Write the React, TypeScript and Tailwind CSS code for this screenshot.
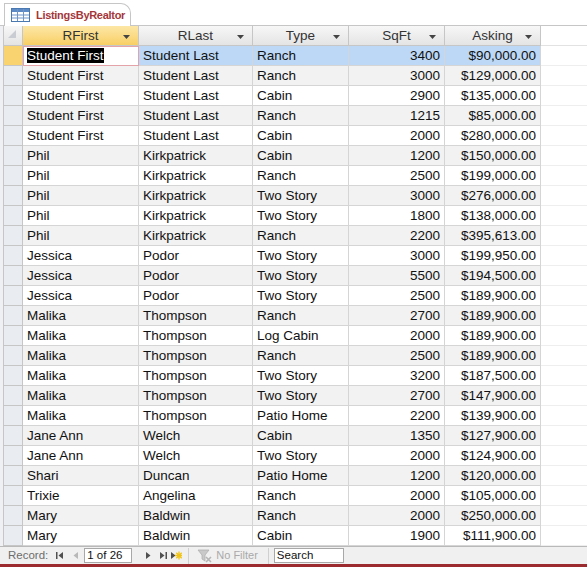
import React from "react";

type Row = [string, string, string, number, string];

const ROWS: Row[] = [
  ["Student First", "Student Last", "Ranch", 3400, "$90,000.00"],
  ["Student First", "Student Last", "Ranch", 3000, "$129,000.00"],
  ["Student First", "Student Last", "Cabin", 2900, "$135,000.00"],
  ["Student First", "Student Last", "Ranch", 1215, "$85,000.00"],
  ["Student First", "Student Last", "Cabin", 2000, "$280,000.00"],
  ["Phil", "Kirkpatrick", "Cabin", 1200, "$150,000.00"],
  ["Phil", "Kirkpatrick", "Ranch", 2500, "$199,000.00"],
  ["Phil", "Kirkpatrick", "Two Story", 3000, "$276,000.00"],
  ["Phil", "Kirkpatrick", "Two Story", 1800, "$138,000.00"],
  ["Phil", "Kirkpatrick", "Ranch", 2200, "$395,613.00"],
  ["Jessica", "Podor", "Two Story", 3000, "$199,950.00"],
  ["Jessica", "Podor", "Two Story", 5500, "$194,500.00"],
  ["Jessica", "Podor", "Two Story", 2500, "$189,900.00"],
  ["Malika", "Thompson", "Ranch", 2700, "$189,900.00"],
  ["Malika", "Thompson", "Log Cabin", 2000, "$189,900.00"],
  ["Malika", "Thompson", "Ranch", 2500, "$189,900.00"],
  ["Malika", "Thompson", "Two Story", 3200, "$187,500.00"],
  ["Malika", "Thompson", "Two Story", 2700, "$147,900.00"],
  ["Malika", "Thompson", "Patio Home", 2200, "$139,900.00"],
  ["Jane Ann", "Welch", "Cabin", 1350, "$127,900.00"],
  ["Jane Ann", "Welch", "Two Story", 2000, "$124,900.00"],
  ["Shari", "Duncan", "Patio Home", 1200, "$120,000.00"],
  ["Trixie", "Angelina", "Ranch", 2000, "$105,000.00"],
  ["Mary", "Baldwin", "Ranch", 2000, "$250,000.00"],
  ["Mary", "Baldwin", "Cabin", 1900, "$111,900.00"],
];

const COLS = "grid grid-cols-[19px_116px_114px_96px_96px_96px_1fr]";

function Arrow() {
  return (
    <svg width="7" height="4" viewBox="0 0 7 4" className="absolute right-[8px] top-[9px]">
      <path d="M0 0h7L3.5 4z" fill="#444" />
    </svg>
  );
}

function Header({ label, active }: { label: string; active?: boolean }) {
  return (
    <div
      className={`relative h-full border-r border-b border-[#c6c6c6] text-center leading-[19px] text-[#333] ${
        active ? "bg-gradient-to-b from-[#fde7a6] to-[#f8cf63]" : "bg-gradient-to-b from-[#f7f7f7] to-[#e4e4e4]"
      }`}
    >
      {label}
      <Arrow />
    </div>
  );
}

function TableIcon() {
  return (
    <svg width="19" height="14" viewBox="0 0 19 14">
      <rect x="0.5" y="0.5" width="18" height="13" fill="#fff" stroke="#4a78b0" />
      <rect x="1" y="1" width="17" height="3" fill="#5b8ac4" />
      <path d="M6.5 1v12M12.5 1v12M1 7h17M1 10h17" stroke="#6f95c8" strokeWidth="1" />
    </svg>
  );
}

function NavBtn({ kind, dim }: { kind: "first" | "prev" | "next" | "last" | "new"; dim?: boolean }) {
  const c = dim ? "#b8b8b8" : "#505050";
  return (
    <svg width="12" height="9" viewBox="0 0 12 9">
      {kind === "first" && (
        <>
          <rect x="2" y="1" width="1.5" height="7" fill={c} />
          <path d="M9 1v7L4.5 4.5z" fill={c} />
        </>
      )}
      {kind === "prev" && <path d="M8 1v7L3.5 4.5z" fill={c} />}
      {kind === "next" && <path d="M4 1v7l4.5-3.5z" fill={c} />}
      {kind === "last" && (
        <>
          <path d="M3 1v7l4.5-3.5z" fill={c} />
          <rect x="8.5" y="1" width="1.5" height="7" fill={c} />
        </>
      )}
      {kind === "new" && (
        <>
          <path d="M1 1v7l4.5-3.5z" fill={c} />
          <path d="M9 0.5v8M5 4.5h8M6.3 1.8l5.4 5.4M11.7 1.8l-5.4 5.4" stroke="#f0c419" strokeWidth="1.3" />
        </>
      )}
    </svg>
  );
}

function FilterIcon() {
  return (
    <svg width="16" height="14" viewBox="0 0 16 14">
      <path d="M1 1h11L8 6v6L5 10V6z" fill="#c9c9c9" stroke="#b0b0b0" strokeWidth="0.8" />
      <path d="M9 8l5 5M14 8l-5 5" stroke="#b5b5b5" strokeWidth="1.6" />
    </svg>
  );
}

export default function App() {
  return (
    <div className="w-[587px] h-[567px] overflow-hidden bg-white flex flex-col text-[13.5px] font-['Liberation_Sans',Arial,sans-serif]">
      {/* tab strip */}
      <div className="h-[26px] shrink-0 flex items-end pl-[4px] bg-white border-b border-[#c6c6c6]">
        <div className="h-[23px] w-[127px] flex items-center gap-[6px] pl-[6px] bg-white border border-b-0 border-[#c6c6c6] rounded-tr-[10px] -mb-px">
          <TableIcon />
          <span className="text-[11px] font-bold text-[#a4373a] tracking-[-0.3px]">ListingsByRealtor</span>
        </div>
      </div>

      {/* datasheet */}
      <div className="flex-1 flex bg-white">
        <div className="w-[4px] bg-[#eef0f3] border-r border-[#c6c6c6]" />
        <div className="flex-1 flex flex-col">
          <div className={`${COLS} h-[20px]`}>
            <div className="relative border-r border-b border-[#c6c6c6] bg-gradient-to-b from-[#f7f7f7] to-[#e4e4e4]">
              <svg width="8" height="8" viewBox="0 0 8 8" className="absolute left-[4px] top-[4px]">
                <path d="M8 0v8H0z" fill="#c9cdd3" />
              </svg>
            </div>
            <Header label="RFirst" active />
            <Header label="RLast" />
            <Header label="Type" />
            <Header label="SqFt" />
            <Header label="Asking" />
            <div className="border-b border-[#e2e2e2] bg-white" />
          </div>
          {ROWS.map((r, i) => {
            const sel = i === 0;
            const alt = i % 2 === 1;
            const cellBg = sel ? "bg-[#bcd8f6]" : alt ? "bg-[#f2f2f2]" : "bg-white";
            const cell = `h-[20px] border-r border-b border-[#d5d5d5] leading-[19px] px-[4px] whitespace-nowrap overflow-hidden text-[#111] ${cellBg}`;
            return (
              <div key={i} className={COLS}>
                <div className={`h-[20px] border-r border-b border-[#c6c6c6] ${sel ? "bg-[#f9d36f]" : "bg-[#e9ecf0]"}`} />
                {sel ? (
                  <div className="h-[20px] border border-[#e3a3a8] bg-white px-[3px] leading-[18px]">
                    <span className="bg-black text-white">{r[0]}</span>
                  </div>
                ) : (
                  <div className={cell}>{r[0]}</div>
                )}
                <div className={cell}>{r[1]}</div>
                <div className={cell}>{r[2]}</div>
                <div className={`${cell} text-right`}>{r[3]}</div>
                <div className={`${cell} text-right`}>{r[4]}</div>
                <div className="h-[20px] border-b border-[#eeeeee] bg-white" />
              </div>
            );
          })}
        </div>
      </div>

      {/* navigation bar */}
      <div className="h-[18px] shrink-0 flex items-center bg-[#f0f0f0] border-t border-[#b9b9b9] text-[11.5px] text-[#6d6d6d]">
        <span className="ml-[8px] mr-[6px]">Record:</span>
        <NavBtn kind="first" />
        <span className="w-[4px]" />
        <NavBtn kind="prev" dim />
        <div className="ml-[2px] w-[48px] h-[15px] bg-white border border-[#a8a8a8] leading-[13px] pl-[2px] text-[#111]">1 of 26</div>
        <span className="w-[10px]" />
        <NavBtn kind="next" />
        <span className="w-[3px]" />
        <NavBtn kind="last" />
        <span className="w-[1px]" />
        <NavBtn kind="new" />
        <div className="ml-[6px] w-px h-[16px] bg-[#d0d0d0]" />
        <span className="w-[8px]" />
        <FilterIcon />
        <span className="ml-[3px] text-[#a9a9a9] text-[11px]">No Filter</span>
        <div className="ml-[10px] w-px h-[16px] bg-[#d0d0d0]" />
        <div className="ml-[5px] w-[70px] h-[15px] bg-white border border-[#a8a8a8] leading-[13px] pl-[2px] text-[#111]">Search</div>
      </div>
      <div className="h-[3px] shrink-0 bg-[#9c2b2f]" />
    </div>
  );
}
